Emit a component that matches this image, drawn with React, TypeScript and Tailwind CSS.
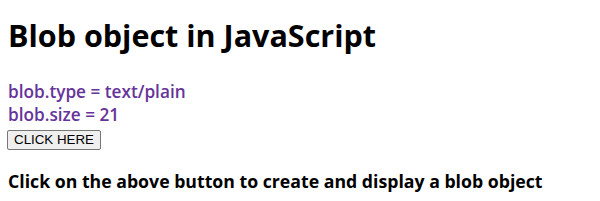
export default function App() {
  return (
    <div className="px-2 pt-[17px] font-['Open_Sans',sans-serif] text-black bg-white">
      <h1 className="text-[30.5px] font-bold leading-[36px]">Blob object in JavaScript</h1>
      <div className="mt-[27px] text-[17.2px] font-semibold text-[#663399] leading-[23px]">
        <div>blob.type = text/plain</div>
        <div>blob.size = 21</div>
      </div>
      <button className="mt-[1px] -ml-px px-[6px] h-[20px] text-[13.33px] leading-none font-['Liberation_Sans',sans-serif] text-black bg-[#efefef] border border-[#767676] rounded-[2px]">
        CLICK HERE
      </button>
      <p className="mt-[19px] text-[17.7px] font-bold leading-[24px]">
        Click on the above button to create and display a blob object
      </p>
    </div>
  );
}
